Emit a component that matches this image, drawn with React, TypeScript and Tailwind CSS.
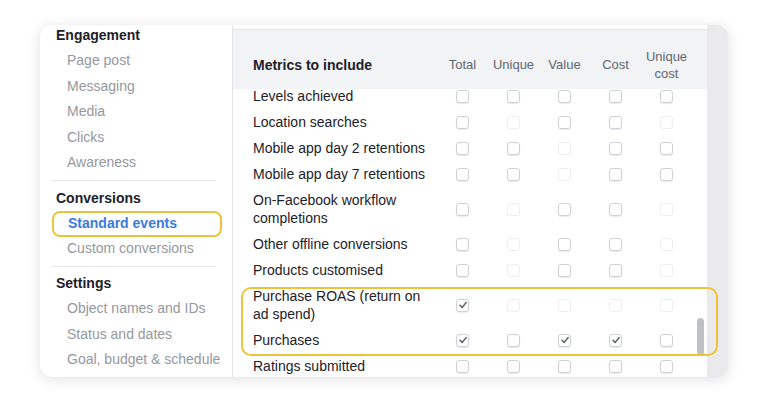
import React from "react";

type S = "e" | "d" | "c";

const Box = ({ s }: { s: S }) => (
  <div
    className={
      s === "d"
        ? "w-[13px] h-[13px] rounded-[3px] border border-[#eceef1] bg-white"
        : "w-[13px] h-[13px] rounded-[3px] border border-[#cdd1d6] bg-white shadow-[0_1px_1px_rgba(0,0,0,0.08)] flex items-center justify-center"
    }
  >
    {s === "c" && (
      <svg width="10" height="10" viewBox="0 0 10 10">
        <path d="M2 5.3 L4.1 7.4 L8.2 2.6" fill="none" stroke="#5f646b" strokeWidth="1.5" strokeLinecap="round" strokeLinejoin="round" />
      </svg>
    )}
  </div>
);

const rows: { label: string[]; s: string }[] = [
  { label: ["Levels achieved"], s: "eeeee" },
  { label: ["Location searches"], s: "edeed" },
  { label: ["Mobile app day 2 retentions"], s: "eedee" },
  { label: ["Mobile app day 7 retentions"], s: "eedee" },
  { label: ["On-Facebook workflow", "completions"], s: "edeed" },
  { label: ["Other offline conversions"], s: "edeed" },
  { label: ["Products customised"], s: "edeed" },
  { label: ["Purchase ROAS (return on", "ad spend)"], s: "cdddd" },
  { label: ["Purchases"], s: "cecce" },
  { label: ["Ratings submitted"], s: "eeeee" },
];

const Item = ({ children }: { children: React.ReactNode }) => (
  <div className="h-[25.5px] leading-[25.5px] pl-[27px] text-[14px] text-[#95989e] whitespace-nowrap">{children}</div>
);
const Head = ({ children }: { children: React.ReactNode }) => (
  <div className="h-[25px] leading-[25px] pl-[16px] text-[14px] font-bold text-[#1d2129] whitespace-nowrap">{children}</div>
);
const Divider = () => <div className="ml-[12px] w-[164px] h-px bg-[#e7e8ea] my-[4.5px]" />;

export default function App() {
  return (
    <div
      className="w-[768px] h-[403px] bg-white pl-[40px] pt-[25px]"
      style={{ fontFamily: '"Liberation Sans", Arial, sans-serif' }}
    >
      <div className="relative w-[688px] h-[352px] rounded-[12px] overflow-hidden bg-[#eaeaec] shadow-[0_2px_14px_rgba(0,0,0,0.13)] flex">
        {/* Sidebar */}
        <div className="w-[193px] h-full bg-white border-r border-[#e4e5e8] overflow-hidden">
          <div className="-mt-[2px]">
            <Head>Engagement</Head>
            <Item>Page post</Item>
            <Item>Messaging</Item>
            <Item>Media</Item>
            <Item>Clicks</Item>
            <Item>Awareness</Item>
            <Divider />
            <Head>Conversions</Head>
            <div className="relative h-[25px] leading-[25px] pl-[28px] text-[14px] font-bold text-[#3a7ae0] whitespace-nowrap">
              Standard events
              <div className="absolute left-[12px] top-0 w-[170px] h-[26px] rounded-[8px] border-2 border-[#edc23c]" />
            </div>
            <Item>Custom conversions</Item>
            <Divider />
            <Head>Settings</Head>
            <Item>Object names and IDs</Item>
            <Item>Status and dates</Item>
            <Item>Goal, budget &amp; schedule</Item>
          </div>
        </div>

        {/* Main panel */}
        <div className="w-[474px] h-full bg-white flex flex-col overflow-hidden">
          <div className="h-[5px] bg-white border-b border-[#e3e4e6] shrink-0" />
          <div className="h-[59px] shrink-0 bg-[#f2f3f5] flex items-center pt-[11px] pl-[20px]">
            <div className="w-[184px] text-[14px] font-bold text-[#1d2129]">Metrics to include</div>
            {["Total", "Unique", "Value", "Cost"].map((h) => (
              <div key={h} className="w-[51px] text-center text-[13px] text-[#606770]">{h}</div>
            ))}
            <div className="w-[51px] text-center text-[13px] leading-[17px] text-[#606770]">
              Unique
              <br />
              cost
            </div>
          </div>
          <div className="flex-1">
            <div className="-mt-[6px]">
              {rows.map((r, i) => (
                <div key={i} className="flex items-center pl-[20px] py-[4px]">
                  <div className="w-[184px] text-[14px] leading-[18px] text-[#1d2129] whitespace-nowrap">
                    {r.label.map((l, j) => (
                      <div key={j}>{l}</div>
                    ))}
                  </div>
                  {r.s.split("").map((c, j) => (
                    <div key={j} className="w-[51px] flex justify-center">
                      <Box s={c as S} />
                    </div>
                  ))}
                </div>
              ))}
            </div>
          </div>
        </div>

        {/* Scrollbar thumb */}
        <div className="absolute left-[657px] top-[293px] w-[7px] h-[37px] rounded-full bg-[#bfc0c2]" />
        {/* Highlight */}
        <div className="absolute left-[201px] top-[262px] w-[477px] h-[69px] rounded-[10px] border-2 border-[#edc23c]" />
      </div>
    </div>
  );
}
